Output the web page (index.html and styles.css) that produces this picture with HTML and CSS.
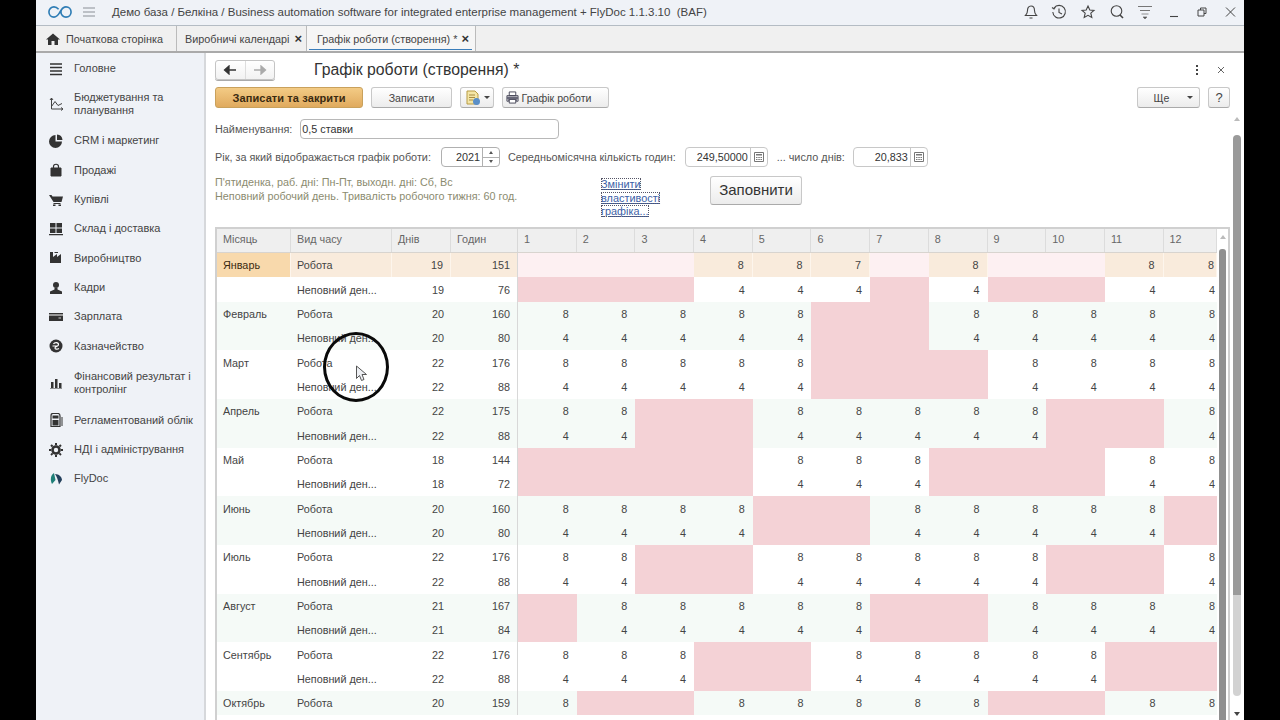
FILE: index.html
```html
<!DOCTYPE html>
<html lang="uk">
<head>
<meta charset="utf-8">
<title>Графік роботи (створення)</title>
<link rel="stylesheet" href="styles.css">
</head>
<body>
<div class="app">
  <header class="titlebar">
    <svg class="logo" viewBox="0 0 26 13" width="24" height="12"><path d="M11.5 3.6C10 1.9 8.4 1 6.5 1 3.4 1 1 3.4 1 6.5S3.4 12 6.5 12c3.400 0 5-3 6.500-5.500S16 1 19.500 1C22.600 1 25 3.400 25 6.500S22.600 12 19.500 12c-3 0-5.500-2.400-5.500-5.500S16.500 1 19.500 1" fill="none" stroke="#2f7db5" stroke-width="1.800"/></svg>
    <svg class="burger" viewBox="0 0 12 10" width="12" height="10"><path d="M0 1h12M0 5h12M0 9h12" stroke="#8a8f96" stroke-width="1"/></svg>
    <span class="apptitle">Демо база / Белкіна / Business automation software for integrated enterprise management + FlyDoc 1.1.3.10&nbsp; (BAF)</span>
    <div class="winicons">
      <svg viewBox="0 0 16 16" width="16" height="16"><path d="M8 2c2.500 0 3.500 2 3.500 4.500 0 2.500 1 4 2 5h-11c1-1 2-2.500 2-5C4.500 4 5.500 2 8 2zM6.500 14h3" fill="none" stroke="#444" stroke-width="1.100"/></svg>
      <svg viewBox="0 0 16 16" width="16" height="16"><path d="M3 4a6.300 6.300 0 1 1-1.200 4M1 3.500l2 1.500 1.500-2M8 4.500V8.500l3 1.500" fill="none" stroke="#444" stroke-width="1.100"/></svg>
      <svg viewBox="0 0 16 16" width="16" height="16"><path d="M8 2l1.800 4 4.200.400-3.200 2.800 1 4.300L8 11.300l-3.800 2.200 1-4.300L2 6.400 6.200 6z" fill="none" stroke="#444" stroke-width="1.100"/></svg>
      <svg viewBox="0 0 16 16" width="16" height="16"><circle cx="7.500" cy="7" r="5.300" fill="none" stroke="#444" stroke-width="1.100"/><path d="M11 11l3 3" stroke="#444" stroke-width="1.600"/></svg>
      <svg viewBox="0 0 16 16" width="16" height="16"><path d="M1 2.500h14M3 6.500h10" stroke="#777" stroke-width="1"/><path d="M4.500 10h7M6 13h4l-2 2z" fill="#444" stroke="#777" stroke-width=".8"/></svg>
      <svg viewBox="0 0 16 16" width="16" height="16"><path d="M4 12.500h8" stroke="#444" stroke-width="1.100"/></svg>
      <svg viewBox="0 0 16 16" width="16" height="16"><path d="M4 6h6v6H4zM6.500 6V4h5.500v5.500H10" fill="none" stroke="#444"/></svg>
      <svg viewBox="0 0 16 16" width="16" height="16"><path d="M3 3.500l9 9M12 3.500l-9 9" stroke="#444" stroke-width="1"/></svg>
    </div>
  </header>
  <nav class="tabbar">
    <div class="tab home">
      <svg viewBox="0 0 14 12" width="14" height="12"><path d="M7 .500L14 6.500h-2V12H8.500V8h-3v4H2V6.500H0z" fill="#333"/></svg>
      <span>Початкова сторінка</span>
    </div>
    <div class="tab second"><span>Виробничі календарі</span><b class="x">×</b></div>
    <div class="tab active"><span>Графік роботи (створення) *</span><b class="x">×</b></div>
  </nav>
  <div class="body">
    <aside class="sidebar">
      <div class="item i1"><svg viewBox="0 0 14 14" width="14" height="14"><path d="M1 2h12M1 5.500h12M1 9h12M1 12.500h12" stroke="#333" stroke-width="1.300"/></svg><span>Головне</span></div>
      <div class="item i2"><svg viewBox="0 0 14 14" width="14" height="14"><path d="M2.500 1v11H14M2.500 9.500L6 4.500l3 4 4-2M1 3l1.500-2L4 3M12 10.500l2 1.500-2 1.500" fill="none" stroke="#444"/></svg><span>Бюджетування та<br>планування</span></div>
      <div class="item"><svg viewBox="0 0 14 14" width="14" height="14"><path d="M6.500 1v6.500H13A6.500 6.500 0 1 1 6.500 1zM8 .500A6 6 0 0 1 13.500 6H8z" fill="#333"/></svg><span>CRM і маркетинг</span></div>
      <div class="item"><svg viewBox="0 0 14 14" width="14" height="14"><path d="M2 5h10v8H2z" fill="#333" stroke="#333"/><path d="M4.500 7V3.500c0-3 5-3 5 0V7" fill="none" stroke="#333" stroke-width="1.200"/></svg><span>Продажі</span></div>
      <div class="item"><svg viewBox="0 0 14 14" width="14" height="14"><path d="M0 2h2.500l1 1.500H14L12.500 9h-8zM4.500 10h7v1h-7z M4 11.500h2.500V13H4zM9.500 11.500H12V13H9.500z" fill="#333"/></svg><span>Купівлі</span></div>
      <div class="item"><svg viewBox="0 0 14 14" width="14" height="14"><path d="M1 1h5.500v4.500H1zM7.500 1H13v4.500H7.500zM1 6.500h5.500V11H1zM7.500 6.500H13V11H7.500zM0 12h14v1.200H0z" fill="#333"/></svg><span>Склад і доставка</span></div>
      <div class="item"><svg viewBox="0 0 14 14" width="14" height="14"><path d="M1 1h3v5l4-3v3l4-3v9H1zM5.500 1H9v1H5.500z" fill="#333"/></svg><span>Виробництво</span></div>
      <div class="item"><svg viewBox="0 0 14 14" width="14" height="14"><circle cx="7" cy="4" r="3" fill="#333"/><path d="M5.500 7h3v1.500L13 10.500V13H1v-2.500l4.500-2z" fill="#333"/></svg><span>Кадри</span></div>
      <div class="item"><svg viewBox="0 0 14 14" width="14" height="14"><path d="M0 3h14v8H0z" fill="#333"/><path d="M0 5h14" stroke="#fff"/><path d="M9.500 8H12" stroke="#ccc"/></svg><span>Зарплата</span></div>
      <div class="item"><svg viewBox="0 0 14 14" width="14" height="14"><circle cx="7" cy="7" r="6.500" fill="#333"/><path d="M4.500 5c1-2 5-2 5 .5S6 7 6 9c0 1.500 2.500 1.500 4 .5M3.500 7h5" fill="none" stroke="#fff" stroke-width="1.200"/></svg><span>Казначейство</span></div>
      <div class="item i2"><svg viewBox="0 0 14 14" width="14" height="14"><path d="M2 6h2.500v6H2zM6 3h2.500v9H6zM10 7h2.500v5H10zM1 12.500h12V13H1z" fill="#333"/></svg><span>Фінансовий результат і<br>контролінг</span></div>
      <div class="item"><svg viewBox="0 0 14 14" width="14" height="14"><path d="M2 3c0-2 .5-2.500 2-2.500h5c1.500 0 2 .5 2 2.500v10.500H2z" fill="none" stroke="#333" stroke-width="1.200"/><path d="M3.500 2.500h6v3h-6zM3.500 7h6v5.500h-6zM12.500 4h1v9h-1z" fill="#333"/></svg><span>Регламентований облік</span></div>
      <div class="item"><svg viewBox="0 0 14 14" width="14" height="14"><circle cx="7" cy="7" r="3.500" fill="none" stroke="#333" stroke-width="2.600"/><path d="M7 0v14M0 7h14M2 2l10 10M12 2L2 12" stroke="#333" stroke-width="2" stroke-dasharray="2.200 9.600 2.200 0"/></svg><span>НДІ і адміністрування</span></div>
      <div class="item"><svg viewBox="0 0 14 14" width="14" height="14"><path d="M5 1C1.500 3 1 8 3 12L6.500 8z" fill="#1f7f78"/><path d="M6 2c4 0 7 3 7 6l-3 4.500C9 8 8 5 6 2z" fill="#24405c"/></svg><span>FlyDoc</span></div>
    </aside>
    <main class="main">
      <div class="headrow">
        <div class="navbtns">
          <span class="nav"><svg viewBox="0 0 14 10" width="14" height="10"><path d="M13 5H4M6 1L1.500 5 6 9z" fill="#333" stroke="#333" stroke-width="1.300"/></svg></span>
          <span class="nav"><svg viewBox="0 0 14 10" width="14" height="10"><path d="M1 5h9M8 1l4.500 4L8 9z" fill="#aaa" stroke="#aaa" stroke-width="1.300"/></svg></span>
        </div>
        <h1 class="title">Графік роботи (створення) *</h1>
        <div class="headtools">
          <svg viewBox="0 0 4 12" width="4" height="12"><path d="M2 1v2M2 5v2M2 9v2" stroke="#444" stroke-width="2"/></svg>
          <svg viewBox="0 0 10 10" width="10" height="10"><path d="M2 2l6 6M8 2l-6 6" stroke="#666"/></svg>
        </div>
      </div>
      <div class="cmdrow">
        <button class="btn primary">Записати та закрити</button>
        <button class="btn save">Записати</button>
        <button class="btn iconbtn"><svg viewBox="0 0 16 16" width="16" height="16"><path d="M2 1h8l3 3v10H2z" fill="#f4e6a6" stroke="#b79b45"/><path d="M4 5h6M4 7.500h6M4 10h4" stroke="#a98d42"/><circle cx="11.500" cy="11.500" r="3.500" fill="#5a8fc8"/></svg><i class="caret"></i></button>
        <button class="btn print"><svg viewBox="0 0 14 14" width="13" height="13"><path d="M3.500 1h7v4h-7zM1 5h12v6h-2V9H3v2H1zM3.500 9h7v4h-7z" fill="#fff" stroke="#445"/><path d="M1 6h12v3H1z" fill="#667"/></svg>Графік роботи</button>
        <button class="btn more">Ще<i class="caret"></i></button>
        <button class="btn help">?</button>
      </div>
      <div class="field namerow">
        <label>Найменування:</label>
        <div class="input name">0,5 ставки</div>
      </div>
      <div class="field yearrow">
        <label>Рік, за який відображається графік роботи:</label>
        <div class="input year"><span class="val">2021</span><span class="spin"><i class="up"></i><i class="down"></i></span></div>
        <label class="l2">Середньомісячна кількість годин:</label>
        <div class="input num hours"><span class="val">249,50000</span><span class="calc"><svg viewBox="0 0 10 10" width="10" height="10"><path d="M.5.500h9v9h-9z" fill="#fff" stroke="#777"/><path d="M2 2h6v1.500H2z" fill="#777"/><path d="M2 5.500h1.500M4.300 5.500h1.500M6.500 5.500H8M2 7.500h1.500M4.300 7.500h1.500M6.500 7.500H8" stroke="#777"/></svg></span></div>
        <label class="l3">... число днів:</label>
        <div class="input num days"><span class="val">20,833</span><span class="calc"><svg viewBox="0 0 10 10" width="10" height="10"><path d="M.5.500h9v9h-9z" fill="#fff" stroke="#777"/><path d="M2 2h6v1.500H2z" fill="#777"/><path d="M2 5.500h1.500M4.300 5.500h1.500M6.500 5.500H8M2 7.500h1.500M4.300 7.500h1.500M6.500 7.500H8" stroke="#777"/></svg></span></div>
      </div>
      <div class="inforow">
        <div class="info">П'ятиденка, раб. дні: Пн-Пт, выходн. дні: Сб, Вс<br>Неповний робочий день. Тривалість робочого тижня: 60 год.</div>
        <a class="link"><span>Змінити</span><br><span>властивості</span><br><span>графіка...</span></a>
        <button class="btn fill">Заповнити</button>
      </div>
      <div class="grid">
        <div class="r head"><span class="tl">Місяць</span><span class="tl">Вид часу</span><span class="tl">Днів</span><span class="tl">Годин</span><span class="tl">1</span><span class="tl">2</span><span class="tl">3</span><span class="tl">4</span><span class="tl">5</span><span class="tl">6</span><span class="tl">7</span><span class="tl">8</span><span class="tl">9</span><span class="tl">10</span><span class="tl">11</span><span class="tl">12</span></div>
        <div class="r sel"><span class="tl m">Январь</span><span class="tl">Робота</span><span>19</span><span>151</span><s></s><s></s><s></s><span>8</span><span>8</span><span>7</span><s></s><span>8</span><s></s><s></s><span>8</span><span>8</span></div>
        <div class="r"><span></span><span class="tl">Неповний ден...</span><span>19</span><span>76</span><s></s><s></s><s></s><span>4</span><span>4</span><span>4</span><s></s><span>4</span><s></s><s></s><span>4</span><span>4</span></div>
        <div class="r z"><span class="tl">Февраль</span><span class="tl">Робота</span><span>20</span><span>160</span><span>8</span><span>8</span><span>8</span><span>8</span><span>8</span><s></s><s></s><span>8</span><span>8</span><span>8</span><span>8</span><span>8</span></div>
        <div class="r z"><span></span><span class="tl">Неповний ден...</span><span>20</span><span>80</span><span>4</span><span>4</span><span>4</span><span>4</span><span>4</span><s></s><s></s><span>4</span><span>4</span><span>4</span><span>4</span><span>4</span></div>
        <div class="r"><span class="tl">Март</span><span class="tl">Робота</span><span>22</span><span>176</span><span>8</span><span>8</span><span>8</span><span>8</span><span>8</span><s></s><s></s><s></s><span>8</span><span>8</span><span>8</span><span>8</span></div>
        <div class="r"><span></span><span class="tl">Неповний ден...</span><span>22</span><span>88</span><span>4</span><span>4</span><span>4</span><span>4</span><span>4</span><s></s><s></s><s></s><span>4</span><span>4</span><span>4</span><span>4</span></div>
        <div class="r z"><span class="tl">Апрель</span><span class="tl">Робота</span><span>22</span><span>175</span><span>8</span><span>8</span><s></s><s></s><span>8</span><span>8</span><span>8</span><span>8</span><span>8</span><s></s><s></s><span>8</span></div>
        <div class="r z"><span></span><span class="tl">Неповний ден...</span><span>22</span><span>88</span><span>4</span><span>4</span><s></s><s></s><span>4</span><span>4</span><span>4</span><span>4</span><span>4</span><s></s><s></s><span>4</span></div>
        <div class="r"><span class="tl">Май</span><span class="tl">Робота</span><span>18</span><span>144</span><s></s><s></s><s></s><s></s><span>8</span><span>8</span><span>8</span><s></s><s></s><s></s><span>8</span><span>8</span></div>
        <div class="r"><span></span><span class="tl">Неповний ден...</span><span>18</span><span>72</span><s></s><s></s><s></s><s></s><span>4</span><span>4</span><span>4</span><s></s><s></s><s></s><span>4</span><span>4</span></div>
        <div class="r z"><span class="tl">Июнь</span><span class="tl">Робота</span><span>20</span><span>160</span><span>8</span><span>8</span><span>8</span><span>8</span><s></s><s></s><span>8</span><span>8</span><span>8</span><span>8</span><span>8</span><s></s></div>
        <div class="r z"><span></span><span class="tl">Неповний ден...</span><span>20</span><span>80</span><span>4</span><span>4</span><span>4</span><span>4</span><s></s><s></s><span>4</span><span>4</span><span>4</span><span>4</span><span>4</span><s></s></div>
        <div class="r"><span class="tl">Июль</span><span class="tl">Робота</span><span>22</span><span>176</span><span>8</span><span>8</span><s></s><s></s><span>8</span><span>8</span><span>8</span><span>8</span><span>8</span><s></s><s></s><span>8</span></div>
        <div class="r"><span></span><span class="tl">Неповний ден...</span><span>22</span><span>88</span><span>4</span><span>4</span><s></s><s></s><span>4</span><span>4</span><span>4</span><span>4</span><span>4</span><s></s><s></s><span>4</span></div>
        <div class="r z"><span class="tl">Август</span><span class="tl">Робота</span><span>21</span><span>167</span><s></s><span>8</span><span>8</span><span>8</span><span>8</span><span>8</span><s></s><s></s><span>8</span><span>8</span><span>8</span><span>8</span></div>
        <div class="r z"><span></span><span class="tl">Неповний ден...</span><span>21</span><span>84</span><s></s><span>4</span><span>4</span><span>4</span><span>4</span><span>4</span><s></s><s></s><span>4</span><span>4</span><span>4</span><span>4</span></div>
        <div class="r"><span class="tl">Сентябрь</span><span class="tl">Робота</span><span>22</span><span>176</span><span>8</span><span>8</span><span>8</span><s></s><s></s><span>8</span><span>8</span><span>8</span><span>8</span><span>8</span><s></s><s></s></div>
        <div class="r"><span></span><span class="tl">Неповний ден...</span><span>22</span><span>88</span><span>4</span><span>4</span><span>4</span><s></s><s></s><span>4</span><span>4</span><span>4</span><span>4</span><span>4</span><s></s><s></s></div>
        <div class="r z"><span class="tl">Октябрь</span><span class="tl">Робота</span><span>20</span><span>159</span><span>8</span><s></s><s></s><span>8</span><span>8</span><span>8</span><span>8</span><span>8</span><s></s><s></s><span>8</span><span>8</span></div>
        <div class="gridbar"><i class="arrow-up"></i><i class="gridthumb"></i></div>
      </div>
      <div class="pagebar"><i class="arrow-up"></i><i class="pagethumb"></i><i class="arrow-down"></i></div>
    </main>
  </div>
  <div class="mouse"><svg viewBox="0 0 14 18" width="14" height="18"><path d="M1.500 1v12.500l3-3 2 5 2.500-1-2-5h4.500z" fill="#eef0f4" stroke="#555"/></svg></div>
</div>
</body>
</html>
```
FILE: styles.css
```css
* { box-sizing: border-box; }
html, body { margin: 0; height: 100%; background: #000; overflow: hidden; }
body { font: 11px "Liberation Sans", Arial, sans-serif; color: #444; }
.app { position: relative; width: 1208px; height: 720px; margin-left: 36px; background: #fff; display: flex; flex-direction: column; overflow: hidden; }

.titlebar { height: 26px; flex: none; display: flex; align-items: center; background: #eff2f7; border-bottom: 1px solid #b4bcc4; padding: 0 0 1px 12px; }
.logo { flex: none; }
.burger { flex: none; margin-left: 11px; }
.apptitle { margin-left: 17px; font-size: 11.500px; color: #444; white-space: nowrap; flex: 1; }
.winicons { display: flex; gap: 12.600px; margin-right: 5px; }

.tabbar { height: 27px; flex: none; display: flex; background: #f0f0f0; border-bottom: 2px solid #aaa; }
.tab { display: flex; align-items: center; border-right: 1px solid #bbb; font-size: 10.800px; color: #444; white-space: nowrap; }
.tab.home { width: 141px; padding-left: 10px; gap: 6px; }
.tab.second { width: 130px; padding-left: 8px; justify-content: space-between; padding-right: 4px; }
.tab.active { width: 169px; padding: 0 6px 0 10px; justify-content: space-between; position: relative; background: #f6f6f6; }
.tab.active::after { content: ""; position: absolute; left: 2px; right: 3px; bottom: 1px; height: 1.500px; background: #3a7dba; }
.x { font-size: 13px; color: #333; }

.body { flex: 1; min-height: 0; display: flex; }
.sidebar { width: 170px; flex: none; background: #eff2f7; border-right: 2px solid #d6d8db; padding-top: 2px; display: flex; flex-direction: column; }
.item { display: flex; align-items: center; height: 29.330px; padding-left: 11px; gap: 12px; font-size: 11px; line-height: 13.500px; color: #444; flex: none; }
.item svg { flex: none; margin-left: 2px; margin-right: -1px; }
.item.i2 { height: 44.500px; }
.item.i1 { height: 27px; }

.main { flex: 1; position: relative; padding: 7px 14px 0 9px; min-width: 0; display: flex; flex-direction: column; }
.headrow { display: flex; align-items: center; height: 20px; flex: none; }
.navbtns { display: flex; width: 60px; height: 20px; border: 1px solid #c4c4c4; border-radius: 3px; background: linear-gradient(#fff, #f2f2f2); box-shadow: 0 1px 0 #aaa; }
.nav { flex: 1; display: flex; align-items: center; justify-content: center; }
.nav + .nav { border-left: 1px solid #ddd; }
.title { margin: 0 0 0 39px; font-size: 15.800px; font-weight: 400; color: #333; flex: 1; }
.headtools { display: flex; align-items: center; gap: 17px; margin-right: 4px; }

.cmdrow { display: flex; margin-top: 7px; height: 21px; flex: none; }
.btn { font: 10.600px "Liberation Sans", Arial, sans-serif; color: #444; height: 21px; padding: 0; border: 1px solid #c8c8c8; border-bottom-color: #aaa; border-radius: 3px; background: linear-gradient(#fff, #ececec); display: flex; align-items: center; justify-content: center; }
.primary { width: 148px; font-size: 11px; font-weight: 700; color: #3a2a10; background: linear-gradient(#f3cb85, #e0aa5e); border-color: #c9a15c; letter-spacing: .1px; }
.save { width: 81px; margin-left: 8px; }
.iconbtn { width: 34px; margin-left: 8px; gap: 3px; }
.print { width: 107px; margin-left: 8px; gap: 3px; padding-right: 14px; }
.more { width: 63px; margin-left: auto; position: relative; padding-right: 14px; }
.more .caret { position: absolute; right: 6px; top: 8px; }
.help { width: 22px; margin-left: 8px; font-size: 13px; }
.caret { display: inline-block; width: 0; height: 0; border: 3px solid transparent; border-top: 3px solid #444; border-bottom: 0; }

.field { display: flex; align-items: center; flex: none; height: 20px; }
.field label { white-space: nowrap; color: #555; font-size: 10.850px; }
.namerow { margin-top: 11px; }
.yearrow { margin-top: 8px; }
.input { height: 20px; border: 1px solid #c8c8c8; border-radius: 4px; background: #fff; color: #333; display: flex; align-items: center; font-size: 10.800px; padding-left: 1px; }
.name { width: 259px; margin-left: 8px; border-color: #b8b8b8; }
.year { width: 59px; margin-left: 10px; border-color: #b0b0b0; }
.val { flex: 1; text-align: right; padding-right: 2px; }
.spin { width: 17px; height: 100%; border-left: 1px solid #b0b0b0; display: flex; flex-direction: column; }
.spin i { flex: 1; display: flex; align-items: center; justify-content: center; }
.up::after { content: ""; border: 2px solid transparent; border-bottom: 3px solid #555; border-top: 0; }
.down { border-top: 1px solid #b0b0b0; }
.down::after { content: ""; border: 2px solid transparent; border-top: 3px solid #555; border-bottom: 0; }
.l2 { margin-left: 8px; }
.l3 { margin-left: 9px; }
.hours { width: 83px; margin-left: 9px; }
.days { width: 75px; margin-left: 8px; }
.calc { width: 17px; height: 100%; border-left: 1px solid #c8c8c8; display: flex; align-items: center; justify-content: center; }

.inforow { display: flex; height: 59.600px; flex: none; }
.info { width: 386px; margin-top: 9px; font-size: 10.800px; line-height: 13.500px; color: #8b8b6f; }
.link { width: 109px; margin-top: 11px; line-height: 13.500px; font-size: 10.900px; color: #3c5fa6; text-decoration: underline; }
.link span { outline: 1px dotted #556; outline-offset: -1px; }
.fill { width: 92px; height: 29px; margin-top: 9px; padding-bottom: 2px; font-size: 15px; color: #333; border-radius: 3px; }

.grid { position: relative; flex: 1; min-height: 0; overflow: hidden; border: 2px solid #d0d0d0; border-bottom: 0; width: 1015px; padding-right: 11px; }
.r { display: grid; grid-template-columns: 74px 101px 59px 67px repeat(11, 58.700px) 1fr; height: 24.330px; }
.r > span, .r > s { display: flex; align-items: center; justify-content: flex-end; padding: 0 7px 0 6px; font-size: 10.800px; color: #444; text-decoration: none; white-space: nowrap; min-width: 0; }
.r > span:nth-child(n+5) { padding-right: 8px; }
.r > .tl { justify-content: flex-start; }
.r > span:nth-child(4), .r > s:nth-child(4) { padding-right: 7px; border-right: 1px solid #d8d8d8; }
.r > span:nth-child(16) { padding-right: 2px; }
.r > s { background: #f4d2d6; }
.z { background: #f5faf7; }
.head { height: 24.500px; background: #efefef; border-bottom: 1px solid #d8d4cf; }
.head > span { color: #666; border-right: 1px solid #dcdcdc; padding-bottom: 3px; }
.sel { background: #f9ebdc; }
.sel > s { background: #fdf0f2; }
.sel > .m { background: #f8d9ac; color: #3a2a10; }
.sel > span { border-right: 1px solid #fdf5ec; }
.gridbar { position: absolute; right: 0; top: 0; bottom: 0; width: 11px; background: #fff; display: flex; flex-direction: column; align-items: center; }
.arrow-up { margin-top: 6px; border: 3px solid transparent; border-bottom: 4px solid #bbb; border-top: 0; }
.gridthumb { position: absolute; left: 2px; top: 20px; bottom: 0; width: 7px; background: #909090; border-radius: 3px 3px 0 0; }
.pagebar { position: absolute; right: 2px; top: 62px; bottom: 4px; width: 10px; }
.pagebar .arrow-up { position: absolute; left: 2px; top: 2px; margin: 0; }
.pagethumb { position: absolute; left: 1px; top: 20px; bottom: 20px; width: 8px; border-radius: 4px; background: linear-gradient(#9a9a9a 0, #9a9a9a 82%, #d2d2d2 82%, #d2d2d2 100%); }
.arrow-down { position: absolute; left: 2px; bottom: 0; border: 3px solid transparent; border-top: 4px solid #444; border-bottom: 0; }

.mouse { position: absolute; left: 287px; top: 332px; width: 66px; height: 70px; border: 3px solid #0a0a0a; border-radius: 50%; }
.mouse svg { position: absolute; left: 29px; top: 30px; }
```
